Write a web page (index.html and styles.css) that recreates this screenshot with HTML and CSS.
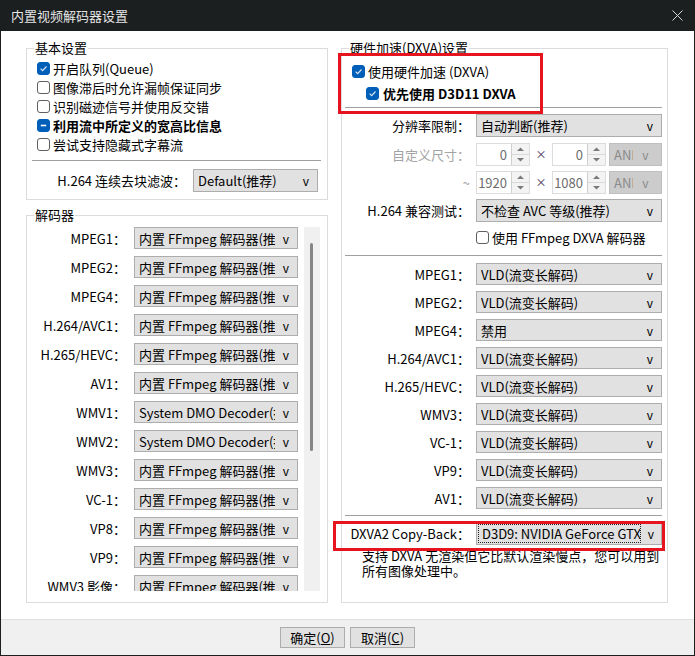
FILE: index.html
```html
<!DOCTYPE html>
<html lang="zh-CN">
<head>
<meta charset="utf-8">
<title>内置视频解码器设置</title>
<link rel="stylesheet" href="styles.css">
</head>
<body>
<div class="window">
  <div class="titlebar">
    <span class="title">内置视频解码器设置</span>
    <svg class="close" width="11" height="11" viewBox="0 0 11 11"><path d="M0.5 0.5L10.5 10.5M10.5 0.5L0.5 10.5"/></svg>
  </div>

  <div class="client">
    <div class="col col-left">
      <div class="group g-basic">
        <div class="legend">基本设置</div>
        <div class="checks">
          <div class="chk"><span class="cb on"><svg viewBox="0 0 11 11"><path d="M2.6 5.7L4.6 7.6L8.5 3.5"/></svg></span><span>开启队列(Queue)</span></div>
          <div class="chk"><span class="cb"></span><span>图像滞后时允许漏帧保证同步</span></div>
          <div class="chk"><span class="cb"></span><span>识别磁迹信号并使用反交错</span></div>
          <div class="chk"><span class="cb mixed"><svg viewBox="0 0 11 11"><path d="M2.8 5.5H8.2"/></svg></span><span class="b">利用流中所定义的宽高比信息</span></div>
          <div class="chk"><span class="cb"></span><span>尝试支持隐藏式字幕流</span></div>
        </div>
        <div class="sep sep-l"></div>
        <div class="frow">
          <span class="lbl">H.264 连续去块滤波：</span>
          <div class="sel w125"><span class="txt">Default(推荐)</span><span class="arr">v</span></div>
        </div>
      </div>

      <div class="group g-dec">
        <div class="legend">解码器</div>
        <div class="scroller">
          <div class="list">
            <div class="drow"><span class="lbl">MPEG1：</span><div class="sel"><span class="txt">内置 FFmpeg 解码器(推荐)</span><span class="arr">v</span></div></div>
            <div class="drow"><span class="lbl">MPEG2：</span><div class="sel"><span class="txt">内置 FFmpeg 解码器(推荐)</span><span class="arr">v</span></div></div>
            <div class="drow"><span class="lbl">MPEG4：</span><div class="sel"><span class="txt">内置 FFmpeg 解码器(推荐)</span><span class="arr">v</span></div></div>
            <div class="drow"><span class="lbl">H.264/AVC1：</span><div class="sel"><span class="txt">内置 FFmpeg 解码器(推荐)</span><span class="arr">v</span></div></div>
            <div class="drow"><span class="lbl">H.265/HEVC：</span><div class="sel"><span class="txt">内置 FFmpeg 解码器(推荐)</span><span class="arr">v</span></div></div>
            <div class="drow"><span class="lbl">AV1：</span><div class="sel"><span class="txt">内置 FFmpeg 解码器(推荐)</span><span class="arr">v</span></div></div>
            <div class="drow"><span class="lbl">WMV1：</span><div class="sel"><span class="txt">System DMO Decoder(推荐)</span><span class="arr">v</span></div></div>
            <div class="drow"><span class="lbl">WMV2：</span><div class="sel"><span class="txt">System DMO Decoder(推荐)</span><span class="arr">v</span></div></div>
            <div class="drow"><span class="lbl">WMV3：</span><div class="sel"><span class="txt">内置 FFmpeg 解码器(推荐)</span><span class="arr">v</span></div></div>
            <div class="drow"><span class="lbl">VC-1：</span><div class="sel"><span class="txt">内置 FFmpeg 解码器(推荐)</span><span class="arr">v</span></div></div>
            <div class="drow"><span class="lbl">VP8：</span><div class="sel"><span class="txt">内置 FFmpeg 解码器(推荐)</span><span class="arr">v</span></div></div>
            <div class="drow"><span class="lbl">VP9：</span><div class="sel"><span class="txt">内置 FFmpeg 解码器(推荐)</span><span class="arr">v</span></div></div>
            <div class="drow"><span class="lbl">WMV3 影像：</span><div class="sel"><span class="txt">内置 FFmpeg 解码器(推荐)</span><span class="arr">v</span></div></div>
          </div>
          <div class="track"><div class="thumb"></div></div>
        </div>
      </div>
    </div>

    <div class="col col-right">
      <div class="group g-hw">
        <div class="legend">硬件加速(DXVA)设置</div>
        <div class="chk hwc1"><span class="cb on"><svg viewBox="0 0 11 11"><path d="M2.6 5.7L4.6 7.6L8.5 3.5"/></svg></span><span>使用硬件加速 (DXVA)</span></div>
        <div class="chk hwc2"><span class="cb on"><svg viewBox="0 0 11 11"><path d="M2.6 5.7L4.6 7.6L8.5 3.5"/></svg></span><span class="b">优先使用 D3D11 DXVA</span></div>
        <div class="sep sep-r"></div>

        <div class="rrow first">
          <span class="lbl">分辨率限制：</span>
          <div class="sel w186"><span class="txt">自动判断(推荐)</span><span class="arr">v</span></div>
        </div>
        <div class="rrow gap6">
          <span class="lbl dim">自定义尺寸：</span>
          <div class="spin"><span class="num">0</span><span class="btns"><span class="up"><svg width="7" height="4" viewBox="0 0 7 4"><path d="M0 4L3.5 0.5L7 4Z"/></svg></span><span class="dn"><svg width="7" height="4" viewBox="0 0 7 4"><path d="M0 0L3.5 3.5L7 0Z"/></svg></span></span></div>
          <span class="times">×</span>
          <div class="spin"><span class="num">0</span><span class="btns"><span class="up"><svg width="7" height="4" viewBox="0 0 7 4"><path d="M0 4L3.5 0.5L7 4Z"/></svg></span><span class="dn"><svg width="7" height="4" viewBox="0 0 7 4"><path d="M0 0L3.5 3.5L7 0Z"/></svg></span></span></div>
          <div class="sel dis"><span class="txt">AND</span><span class="arr">v</span></div>
        </div>
        <div class="rrow">
          <span class="lbl dim">~</span>
          <div class="spin"><span class="num">1920</span><span class="btns"><span class="up"><svg width="7" height="4" viewBox="0 0 7 4"><path d="M0 4L3.5 0.5L7 4Z"/></svg></span><span class="dn"><svg width="7" height="4" viewBox="0 0 7 4"><path d="M0 0L3.5 3.5L7 0Z"/></svg></span></span></div>
          <span class="times">×</span>
          <div class="spin"><span class="num">1080</span><span class="btns"><span class="up"><svg width="7" height="4" viewBox="0 0 7 4"><path d="M0 4L3.5 0.5L7 4Z"/></svg></span><span class="dn"><svg width="7" height="4" viewBox="0 0 7 4"><path d="M0 0L3.5 3.5L7 0Z"/></svg></span></span></div>
          <div class="sel dis"><span class="txt">AND</span><span class="arr">v</span></div>
        </div>
        <div class="rrow">
          <span class="lbl">H.264 兼容测试：</span>
          <div class="sel w186"><span class="txt">不检查 AVC 等级(推荐)</span><span class="arr">v</span></div>
        </div>
        <div class="chk ffc"><span class="cb"></span><span>使用 FFmpeg DXVA 解码器</span></div>
        <div class="sep sep-r s2"></div>

        <div class="hlist">
          <div class="hrow"><span class="lbl">MPEG1：</span><div class="sel w186"><span class="txt">VLD(流变长解码)</span><span class="arr">v</span></div></div>
          <div class="hrow"><span class="lbl">MPEG2：</span><div class="sel w186"><span class="txt">VLD(流变长解码)</span><span class="arr">v</span></div></div>
          <div class="hrow"><span class="lbl">MPEG4：</span><div class="sel w186"><span class="txt">禁用</span><span class="arr">v</span></div></div>
          <div class="hrow"><span class="lbl">H.264/AVC1：</span><div class="sel w186"><span class="txt">VLD(流变长解码)</span><span class="arr">v</span></div></div>
          <div class="hrow"><span class="lbl">H.265/HEVC：</span><div class="sel w186"><span class="txt">VLD(流变长解码)</span><span class="arr">v</span></div></div>
          <div class="hrow"><span class="lbl">WMV3：</span><div class="sel w186"><span class="txt">VLD(流变长解码)</span><span class="arr">v</span></div></div>
          <div class="hrow"><span class="lbl">VC-1：</span><div class="sel w186"><span class="txt">VLD(流变长解码)</span><span class="arr">v</span></div></div>
          <div class="hrow"><span class="lbl">VP9：</span><div class="sel w186"><span class="txt">VLD(流变长解码)</span><span class="arr">v</span></div></div>
          <div class="hrow"><span class="lbl">AV1：</span><div class="sel w186"><span class="txt">VLD(流变长解码)</span><span class="arr">v</span></div></div>
        </div>
        <div class="sep sep-r s3"></div>

        <div class="rrow cb-row">
          <span class="lbl">DXVA2 Copy-Back：</span>
          <div class="sel w186 focus"><span class="txt">D3D9: NVIDIA GeForce GTX 1060</span><span class="arr">v</span></div>
        </div>
        <p class="note">支持 DXVA 无渲染但它比默认渲染慢点，您可以用到<br>所有图像处理中。</p>
      </div>
    </div>
  </div>

  <div class="footer">
    <div class="btn">确定(<u>O</u>)</div>
    <div class="btn">取消(<u>C</u>)</div>
  </div>

  <div class="hl hl1"></div>
  <div class="hl hl2"></div>
</div>
</body>
</html>
```

FILE: styles.css
```css
* { box-sizing: border-box; }
html, body { margin: 0; padding: 0; background: #fff; }
body {
  font-family: "Noto Sans CJK SC", "Noto Sans", sans-serif;
  font-size: 13px;
  line-height: 17px;
  color: #000;
}

.window {
  position: relative;
  width: 695px;
  height: 656px;
  background: #fff;
  border: 1px solid #1c1f20;
  border-top: 0;
  display: flex;
  flex-direction: column;
  overflow: hidden;
}

.titlebar {
  flex: none;
  height: 31px;
  background: #1b1f20;
  color: #e6e6e6;
  display: flex;
  align-items: center;
  justify-content: space-between;
  padding: 0 11px 0 10px;
}
.title { font-size: 13px; }
.close path { stroke: #d8d8d8; stroke-width: 1; fill: none; }

.client {
  flex: 1;
  display: flex;
  gap: 13px;
  padding: 17px 26px 16px 25px;
}
.col { display: flex; flex-direction: column; }
.col-left { width: 302px; }
.col-right { width: 327px; }

.group { border: 1px solid #dcdcdc; }
.legend {
  width: fit-content;
  margin: -9px 0 0 7px;
  padding: 0 1px;
  background: #fff;
  line-height: 16px;
}
.g-dec { margin-top: 15px; flex: 1; }
.g-hw { flex: 1; }

/* checkboxes */
.checks { padding: 3px 0 0 10px; }
.chk { height: 19px; display: flex; align-items: center; }
.cb {
  flex: none;
  width: 13px;
  height: 13px;
  border: 1px solid #5f5f5f;
  border-radius: 3px;
  background: #fff;
  margin-right: 3px;
}
.cb svg { display: block; width: 11px; height: 11px; }
.cb.on, .cb.mixed { background: #005fb8; border-color: #005fb8; }
.cb.on path { stroke: #dfe9f5; stroke-width: 1.1; fill: none; }
.cb.mixed path { stroke: #fff; stroke-width: 1.6; fill: none; }
.b { font-weight: bold; }

.sep { height: 1px; background: #a0a0a0; }
.sep-l { margin: 6px 6px 0 5px; }
.sep-r { margin: 4px 5px 0 3px; }
.sep-r.s2 { margin-top: 8px; }
.sep-r.s3 { margin-top: 6px; }

/* select-like boxes */
.sel {
  display: flex;
  align-items: center;
  height: 100%;
  border: 1px solid #adadad;
  background: #e1e1e1;
  padding-left: 4px;
  overflow: hidden;
}
.sel .txt {
  flex: 1;
  min-width: 0;
  overflow: hidden;
  white-space: nowrap;
}
.sel .arr {
  flex: none;
  width: 22px;
  text-align: center;
  font-size: 12px;
}
.w125 { width: 125px; }
.w186 { width: 186px; }
.sel.dis {
  width: 53px;
  margin-left: 3px;
  background: #cccccc;
  border-color: #bfbfbf;
  color: #8b8b8b;
}
.sel.dis .txt { flex: none; width: 19px; }
.sel.dis .arr { width: 25px; }
.sel.focus { padding-left: 1px; }
.sel.focus .txt {
  align-self: stretch;
  margin: 1px 0;
  padding-left: 3px;
  border: 1px dotted #222;
  line-height: 17px;
}
.sel.focus .arr { width: 20px; }

.lbl { flex: 1; text-align: right; white-space: nowrap; }
.dim { color: #a3a3a3; }

/* basic group filter row */
.frow {
  display: flex;
  align-items: center;
  gap: 7px;
  height: 38px;
  padding: 8px 9px 7px 0;
}
.frow .sel { height: 23px; }

/* decoder list */
.scroller {
  display: flex;
  height: 364px;
  margin: 4px 7px 0 0;
}
.list { flex: 1; overflow: hidden; }
.drow { display: flex; align-items: center; height: 22px; margin-bottom: 7px; }
.drow .lbl { margin-right: 8px; }
.drow .sel { width: 164px; }
.track {
  flex: none;
  width: 16px;
  margin-left: 6px;
  background: #f0f0f0;
  padding: 16px 0 0 6px;
}
.thumb { width: 3px; height: 208px; background: #858585; border-radius: 2px; }

/* hardware group */
.hwc1 { margin-top: 6px; padding-left: 10px; }
.hwc2 { margin-top: 3px; padding-left: 24px; }
.hwc2 .cb { margin-right: 4px; }

.rrow {
  display: flex;
  align-items: center;
  height: 23px;
  margin-top: 5px;
  padding-right: 5px;
}
.rrow.first, .rrow.gap6, .rrow.cb-row { margin-top: 6px; }
.rrow .lbl { margin-right: 6px; }

.spin {
  flex: none;
  width: 54px;
  height: 23px;
  display: flex;
  border: 1px solid #dcdcdc;
  background: #fff;
}
.spin .num {
  flex: 1;
  text-align: right;
  padding-right: 4px;
  line-height: 21px;
  color: #6d6d6d;
}
.spin .btns {
  flex: none;
  width: 18px;
  display: flex;
  flex-direction: column;
  border-left: 1px solid #cfcfcf;
  background: #f3f3f3;
}
.spin .btns span {
  flex: 1;
  display: flex;
  align-items: center;
  justify-content: center;
}
.spin .btns .up { border-bottom: 1px solid #d9d9d9; }
.spin .btns path { fill: #7a7a7a; }
.times {
  flex: none;
  width: 22px;
  text-align: center;
  font-size: 11px;
  color: #3a2a4a;
}

.ffc { margin-top: 6px; padding-left: 134px; }

.hlist { padding-top: 1px; }
.hrow { display: flex; align-items: center; height: 22px; margin-top: 6px; padding-right: 5px; }
.hrow .lbl { margin-right: 6px; }

.note {
  margin: 3px 0 0;
  padding-left: 20px;
  line-height: 15px;
}

/* footer */
.footer {
  flex: none;
  height: 36px;
  border-top: 1px solid #dfdfdf;
  background: #f0f0f0;
  display: flex;
  justify-content: center;
  align-items: flex-start;
  gap: 5px;
  padding-top: 7px;
}
.btn {
  width: 65px;
  height: 21px;
  border: 1px solid #adadad;
  background: #e1e1e1;
  display: flex;
  align-items: center;
  justify-content: center;
}

/* red annotation boxes drawn over the dialog */
.hl { position: absolute; border: 3px solid #e5141f; pointer-events: none; }
.hl1 { left: 337px; top: 53px; width: 205px; height: 61px; }
.hl2 { left: 332px; top: 521px; width: 332px; height: 30px; }
```
